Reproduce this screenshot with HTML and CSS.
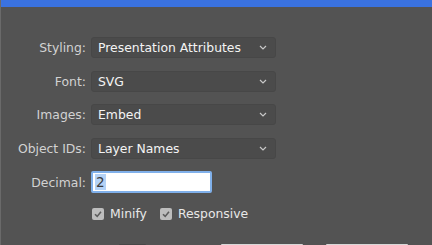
FILE: index.html
```html
<!DOCTYPE html>
<html>
<head>
<meta charset="utf-8">
<link rel="stylesheet" href="styles.css">
</head>
<body>
<div class="window">
  <div class="titlebar"></div>
  <div class="form">
    <div class="row">
      <span class="label">Styling:</span>
      <div class="select"><span>Presentation Attributes</span><svg class="chev" viewBox="0 0 8 5" width="8" height="5"><path d="M1 1 L4 4 L7 1" fill="none" stroke="#c8c8c8" stroke-width="1.2"/></svg></div>
    </div>
    <div class="row">
      <span class="label">Font:</span>
      <div class="select"><span>SVG</span><svg class="chev" viewBox="0 0 8 5" width="8" height="5"><path d="M1 1 L4 4 L7 1" fill="none" stroke="#c8c8c8" stroke-width="1.2"/></svg></div>
    </div>
    <div class="row">
      <span class="label">Images:</span>
      <div class="select"><span>Embed</span><svg class="chev" viewBox="0 0 8 5" width="8" height="5"><path d="M1 1 L4 4 L7 1" fill="none" stroke="#c8c8c8" stroke-width="1.2"/></svg></div>
    </div>
    <div class="row">
      <span class="label">Object IDs:</span>
      <div class="select"><span>Layer Names</span><svg class="chev" viewBox="0 0 8 5" width="8" height="5"><path d="M1 1 L4 4 L7 1" fill="none" stroke="#c8c8c8" stroke-width="1.2"/></svg></div>
    </div>
    <div class="row">
      <span class="label">Decimal:</span>
      <div class="input"><span class="sel">2</span></div>
    </div>
    <div class="checks">
      <label class="check"><span class="box"><svg viewBox="0 0 12 12" width="12" height="12"><path d="M3 6.2 L5.2 8.4 L9 3.8" fill="none" stroke="#5c5c5c" stroke-width="1.6"/></svg></span>Minify</label>
      <label class="check"><span class="box"><svg viewBox="0 0 12 12" width="12" height="12"><path d="M3 6.2 L5.2 8.4 L9 3.8" fill="none" stroke="#5c5c5c" stroke-width="1.6"/></svg></span>Responsive</label>
    </div>
  </div>
  <div class="buttons">
    <span class="btn dark"></span>
    <span class="btn light"></span>
    <span class="btn light"></span>
  </div>
</div>
</body>
</html>
```
FILE: styles.css
```css
html, body {
  margin: 0;
  padding: 0;
}
body {
  width: 432px;
  height: 245px;
  overflow: hidden;
  background: #535353;
  font-family: "DejaVu Sans", "Open Sans", sans-serif;
  font-size: 12.4px;
}
.window {
  height: 245px;
  display: flex;
  flex-direction: column;
  border-left: 1px solid #6a6a6a;
  box-sizing: border-box;
}
.titlebar {
  height: 7px;
  background: #3a72e0;
}
.form {
  padding-top: 30px;
  display: flex;
  flex-direction: column;
  gap: 12.5px;
}
.row {
  display: grid;
  grid-template-columns: 85px auto;
  column-gap: 5px;
  align-items: center;
  height: 21px;
}
.label {
  text-align: right;
  color: #d2d2d2;
}
.select {
  width: 185px;
  height: 21px;
  box-sizing: border-box;
  background: #4b4b4b;
  border: 1px solid #474747;
  border-radius: 3px;
  display: flex;
  align-items: center;
  justify-content: space-between;
  padding: 0 8px 0 6px;
  color: #f4f4f4;
}
.chev {
  display: block;
}
.input {
  width: 121px;
  height: 22px;
  box-sizing: border-box;
  background: #ffffff;
  border: 2px solid #80b0ea;
  border-radius: 2px;
  display: flex;
  align-items: center;
  padding-left: 2px;
  color: #3a3a3a;
  font-size: 13.5px;
}
.sel {
  background: #b4d2f6;
  padding: 0 1px;
  line-height: 16px;
}
.checks {
  display: flex;
  gap: 13px;
  padding-left: 91px;
  margin-top: 2px;
  height: 14px;
  align-items: center;
}
.check {
  display: flex;
  align-items: center;
  gap: 6px;
  color: #e8e8e8;
}
.box {
  width: 12px;
  height: 12px;
  background: #bdbdbd;
  border-radius: 2px;
  display: block;
}
.box svg {
  display: block;
}
.buttons {
  margin-top: auto;
  height: 1px;
  display: flex;
  padding-left: 118px;
}
.btn {
  display: block;
  height: 1px;
  border-radius: 2px 2px 0 0;
}
.btn.dark {
  width: 27px;
  background: #474747;
}
.btn.light {
  width: 82px;
  background: #d8d8d8;
}
.btn.light:nth-child(2) {
  margin-left: 75px;
}
.btn.light:nth-child(3) {
  margin-left: 23px;
}
```
